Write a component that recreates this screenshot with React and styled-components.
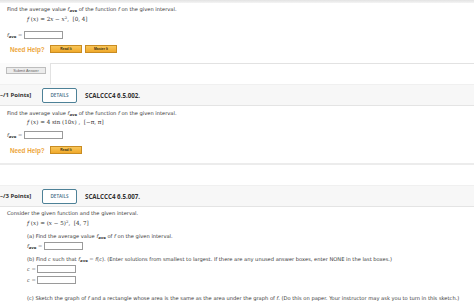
import React from 'react'
import styled, { createGlobalStyle } from 'styled-components'

const GlobalStyle = createGlobalStyle`
  html, body { margin: 0; padding: 0; background: #ffffff; }
  body { font-family: "DejaVu Sans", Verdana, sans-serif; color: #333333; overflow: hidden; }
`

const Page = styled.div`
  width: 474px;
  height: 304px;
  overflow: hidden;
  display: flex;
  flex-direction: column;
`

const TopEdge = styled.div`
  height: 3px;
  flex: none;
  background: linear-gradient(#e3e3e3, #f4f4f4);
`

const Body = styled.div`
  display: flex;
  flex-direction: column;
  padding-left: 7px;
  flex: none;
`

const Prompt = styled.div`
  font-size: 5.15px;
  line-height: 8px;
  height: 8px;
  color: #3a3a3a;
  white-space: nowrap;
  padding-left: ${p => p.$indent || 0}px;
  margin-top: ${p => p.$mt || 0}px;
  i { font-style: italic; }
  sub { font-size: 3.8px; vertical-align: -1.2px; font-weight: bold; line-height: 0; }
`

const Formula = styled.div`
  font-family: "DejaVu Serif", "Liberation Serif", serif;
  font-size: 5.6px;
  line-height: 11px;
  height: 11px;
  padding-left: ${p => p.$indent || 20}px;
  margin-top: ${p => p.$mt || 0}px;
  color: #333;
  white-space: nowrap;
  i { font-style: italic; }
  sup { font-size: 3.8px; vertical-align: 2px; line-height: 0; }
`

const AnswerRow = styled.div`
  display: flex;
  align-items: center;
  height: 11px;
  padding-left: ${p => p.$indent || 0}px;
  margin-top: ${p => p.$mt || 0}px;
`

const Label = styled.span`
  font-size: 5.15px;
  color: #3a3a3a;
  width: ${p => p.$w}px;
  flex: none;
  i { font-style: italic; }
  sub { font-size: 3.8px; vertical-align: -1.2px; font-weight: bold; line-height: 0; }
`

const Input = styled.div`
  width: 37px;
  height: 6px;
  border: 1px solid #9a9a9a;
  background: #fff;
`

const HelpRow = styled.div`
  display: flex;
  align-items: center;
  gap: 3px;
  height: 12px;
  padding-left: 3px;
  margin-top: ${p => p.$mt || 0}px;
`

const NeedHelp = styled.span`
  font-family: "Liberation Sans", Arial, sans-serif;
  font-weight: bold;
  font-size: 6.3px;
  color: #eda63a;
  width: 37px;
`

const HelpButton = styled.div`
  width: 32px;
  height: 8px;
  box-sizing: border-box;
  border: 1px solid #c98c22;
  background: linear-gradient(#f8c65a, #f0a92b);
  display: flex;
  align-items: center;
  justify-content: center;
  font-family: "Liberation Sans", Arial, sans-serif;
  font-size: 3.4px;
  font-weight: bold;
  color: #3a2a10;
`

const SubmitBar = styled.div`
  display: flex;
  height: 21px;
  flex: none;
  margin-top: 8px;
`

const SubmitCell = styled.div`
  width: 50px;
  padding: 4px 0 0 6px;
  box-sizing: border-box;
  background: #fbfbfb;
`

const SubmitButton = styled.div`
  width: 40px;
  height: 7px;
  box-sizing: border-box;
  border: 1px solid #bdbdbd;
  background: #ececec;
  font-family: "Liberation Sans", Arial, sans-serif;
  font-size: 3.8px;
  color: #666;
  display: flex;
  align-items: center;
  justify-content: center;
`

const SubmitRest = styled.div`
  flex: 1;
  border-top: 1px solid #e2e2e2;
  border-left: 1px solid #e2e2e2;
  background: #fff;
`

const Spacer = styled.div`
  height: ${p => p.$h}px;
  flex: none;
`

const Separator = styled.div`
  height: 2px;
  flex: none;
  background: #ececec;
`

const Header = styled.div`
  height: 22px;
  flex: none;
  box-sizing: border-box;
  display: flex;
  align-items: center;
  background: #f7f7f7;
  border-top: 1px solid #f0f0f0;
  border-bottom: 1px solid #e4e4e4;
  font-family: "Open Sans", "DejaVu Sans", sans-serif;
`

const Points = styled.span`
  font-weight: bold;
  font-size: 6px;
  color: #333;
  width: 42px;
  white-space: nowrap;
`

const DetailsButton = styled.div`
  width: 35px;
  height: 15px;
  box-sizing: border-box;
  border: 1px solid #4d8197;
  border-radius: 2px;
  background: #fff;
  color: #3d6c84;
  font-size: 4.6px;
  font-weight: 600;
  display: flex;
  align-items: center;
  justify-content: center;
`

const Code = styled.span`
  font-weight: bold;
  font-size: 6.2px;
  color: #333;
  margin-left: 8px;
`

const fave = <><i>f</i><sub>ave</sub></>

export default function App() {
  return (
    <Page>
      <GlobalStyle />
      <TopEdge />
      <Body>
        <Prompt $mt={2}>Find the average value {fave} of the function <i>f</i> on the given interval.</Prompt>
        <Formula $mt={1}><i>f</i> (<i>x</i>) = 2<i>x</i> − <i>x</i><sup>2</sup>, &nbsp;[0, 4]</Formula>
        <AnswerRow $mt={4}><Label $w={17}>{fave} =</Label><Input /></AnswerRow>
        <HelpRow $mt={3}>
          <NeedHelp>Need Help?</NeedHelp>
          <HelpButton>Read It</HelpButton>
          <HelpButton>Master It</HelpButton>
        </HelpRow>
      </Body>
      <SubmitBar>
        <SubmitCell><SubmitButton>Submit Answer</SubmitButton></SubmitCell>
        <SubmitRest />
      </SubmitBar>
      <Header>
        <Points>–/1 Points]</Points>
        <DetailsButton>DETAILS</DetailsButton>
        <Code>SCALCCC4 6.5.002.</Code>
      </Header>
      <Body>
        <Prompt $mt={3}>Find the average value {fave} of the function <i>f</i> on the given interval.</Prompt>
        <Formula $mt={0}><i>f</i> (<i>x</i>) = 4 sin (10<i>x</i>) , &nbsp;[−π, π]</Formula>
        <AnswerRow $mt={1}><Label $w={17}>{fave} =</Label><Input /></AnswerRow>
        <HelpRow $mt={4}>
          <NeedHelp>Need Help?</NeedHelp>
          <HelpButton>Read It</HelpButton>
        </HelpRow>
      </Body>
      <Spacer $h={7} />
      <Separator />
      <Spacer $h={20} />
      <Header>
        <Points>–/3 Points]</Points>
        <DetailsButton>DETAILS</DetailsButton>
        <Code>SCALCCC4 6.5.007.</Code>
      </Header>
      <Body>
        <Prompt $mt={2}>Consider the given function and the given interval.</Prompt>
        <Formula $mt={1}><i>f</i> (<i>x</i>) = (<i>x</i> − 5)<sup>2</sup>, &nbsp;[4, 7]</Formula>
        <Prompt $indent={20} $mt={3}>(a) Find the average value {fave} of <i>f</i> on the given interval.</Prompt>
        <AnswerRow $indent={20}><Label $w={17}>{fave} =</Label><Input /></AnswerRow>
        <Prompt $indent={20} $mt={4}>(b) Find <i>c</i> such that {fave} = <i>f</i>(<i>c</i>). (Enter solutions from smallest to largest. If there are any unused answer boxes, enter NONE in the last boxes.)</Prompt>
        <AnswerRow $indent={20}><Label $w={10}><i>c</i> =</Label><Input /></AnswerRow>
        <AnswerRow $indent={20}><Label $w={10}><i>c</i> =</Label><Input /></AnswerRow>
        <Prompt $indent={20} $mt={9}>(c) Sketch the graph of <i>f</i> and a rectangle whose area is the same as the area under the graph of <i>f</i>. (Do this on paper. Your instructor may ask you to turn in this sketch.)</Prompt>
      </Body>
    </Page>
  )
}
